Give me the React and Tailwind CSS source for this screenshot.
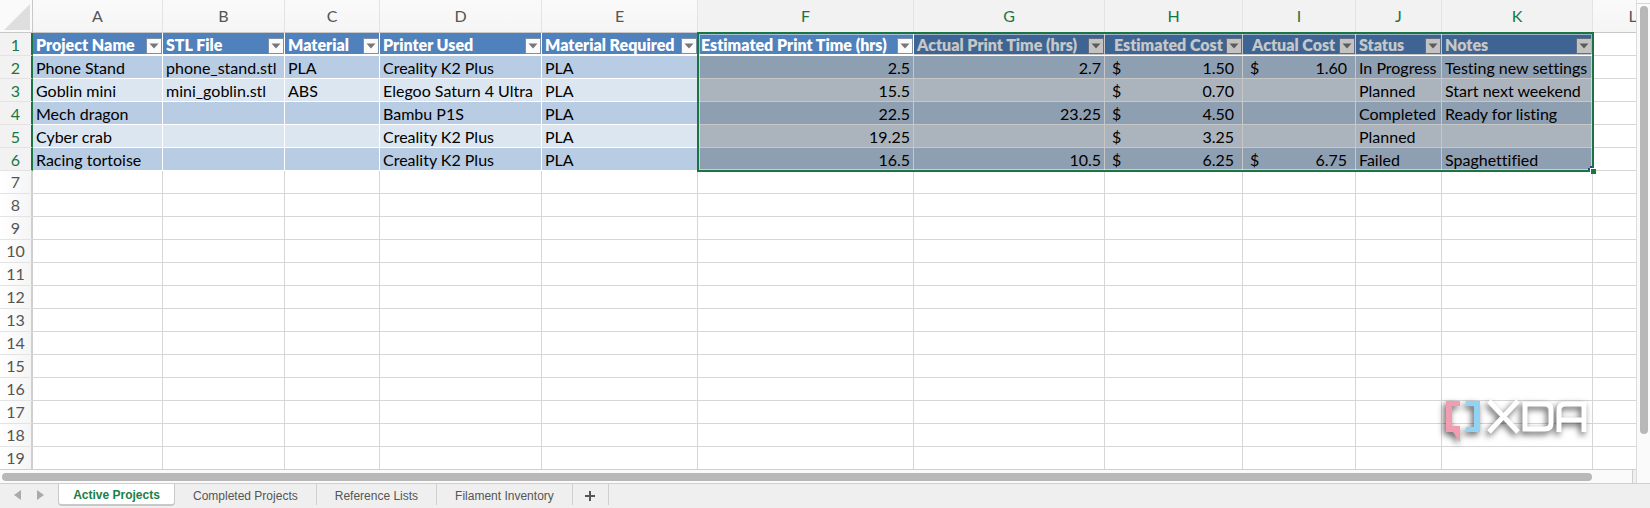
const columns = [
  { id: "A", width: "w-[130px]", title: "Project Name" },
  { id: "B", width: "w-[122px]", title: "STL File" },
  { id: "C", width: "w-[95px]", title: "Material" },
  { id: "D", width: "w-[162px]", title: "Printer Used" },
  { id: "E", width: "w-[156px]", title: "Material Required" },
  { id: "F", width: "w-[216px]", title: "Estimated Print Time (hrs)", number: true },
  { id: "G", width: "w-[191px]", title: "Actual Print Time (hrs)", number: true },
  { id: "H", width: "w-[138px]", title: "Estimated Cost", money: true },
  { id: "I", width: "w-[113px]", title: "Actual Cost", money: true },
  { id: "J", width: "w-[86px]", title: "Status" },
  { id: "K", width: "w-[151px]", title: "Notes" },
  { id: "L", width: "" },
];

const projects = [
  ["Phone Stand", "phone_stand.stl", "PLA", "Creality K2 Plus", "PLA", "2.5", "2.7", "1.50", "1.60", "In Progress", "Testing new settings"],
  ["Goblin mini", "mini_goblin.stl", "ABS", "Elegoo Saturn 4 Ultra", "PLA", "15.5", "", "0.70", "", "Planned", "Start next weekend"],
  ["Mech dragon", "", "", "Bambu P1S", "PLA", "22.5", "23.25", "4.50", "", "Completed", "Ready for listing"],
  ["Cyber crab", "", "", "Creality K2 Plus", "PLA", "19.25", "", "3.25", "", "Planned", ""],
  ["Racing tortoise", "", "", "Creality K2 Plus", "PLA", "16.5", "10.5", "6.25", "6.75", "Failed", "Spaghettified"],
];

const emptyRows = [7, 8, 9, 10, 11, 12, 13, 14, 15, 16, 17, 18, 19];

const sheets = ["Completed Projects", "Reference Lists", "Filament Inventory"];

const shade =
  "relative after:absolute after:-right-px after:-bottom-px after:top-0 after:left-0 after:bg-black/22 after:pointer-events-none";

const isSelected = (index) => index >= 5 && index <= 10;

const FilterButton = ({ title }) => (
  <button
    aria-label={`Filter ${title}`}
    className="flex h-4 w-4 shrink-0 items-center justify-center border border-[#7f8fa6] bg-[#fafafa]"
  >
    <svg width="10" height="6" viewBox="0 0 10 6">
      <path d="M0.5 0.5h9L5 5.5z" fill="#777" />
    </svg>
  </button>
);

const RowNumber = ({ number, active }) => (
  <th
    scope="row"
    className={
      active
        ? "h-[23px] border-r-2 border-b border-r-[#1a7544] border-b-[#e3e3e3] bg-[#f2f2f2] px-0 pt-px pb-0 text-center font-normal text-[#1a7544]"
        : "h-[23px] border-r-2 border-b border-r-[#cfcfcf] border-b-[#e3e3e3] bg-linear-to-r from-white to-[#f5f5f5] p-0 text-center font-normal text-[#555]"
    }
  >
    {number}
  </th>
);

const HeaderCell = ({ column, index }) => (
  <td
    className={`h-[23px] border-r border-b-2 border-white bg-[#4f81bd] p-0 ${index > 5 ? shade : ""}`}
  >
    <div className="flex h-[21px] items-end justify-between">
      <span
        className={`leading-[18px] font-extrabold whitespace-nowrap text-white ${column.money ? "pl-[9px]" : "pl-[3px]"}`}
      >
        {column.title}
      </span>
      <FilterButton title={column.title} />
    </div>
  </td>
);

const Cell = ({ value, column, index, banded }) => (
  <td
    className={`h-[23px] border-r border-b border-white px-[3px] pt-px pb-0 whitespace-nowrap ${
      banded ? "bg-[#b8cce4]" : "bg-[#dce6f1]"
    } ${column.number ? "text-right" : ""} ${isSelected(index) ? shade : ""}`}
  >
    {column.money && value ? (
      <div className="flex justify-between pr-[5px] pl-1">
        <span>$</span>
        <span>{value}</span>
      </div>
    ) : (
      value
    )}
  </td>
);

const EmptyCell = () => <td className="h-[23px] border-r border-b border-[#d6d6d6] bg-white p-0" />;

const Grid = () => (
  <div className="relative min-h-0 flex-1 overflow-hidden">
    <table className="w-full min-w-[1673px] table-fixed border-separate border-spacing-0 text-base leading-5 text-black [font-variant-ligatures:none]">
      <colgroup>
        <col className="w-[33px]" />
        {columns.map((column) => (
          <col key={column.id} className={column.width} />
        ))}
      </colgroup>
      <thead>
        <tr>
          <td className="h-[33px] border-r border-b border-[#c8c8c8] bg-[#fafafa] p-0">
            <svg className="mt-px ml-1" width="27" height="28" viewBox="0 0 27 28">
              <path d="M26 1v26H0z" fill="#dedede" />
            </svg>
          </td>
          {columns.map((column, index) => (
            <th
              key={column.id}
              scope="col"
              className={
                isSelected(index)
                  ? "h-[33px] border-r border-b border-r-[#e3e3e3] border-b-[#c8c8c8] bg-[#f2f2f2] p-0 font-normal text-[#1a7544]"
                  : "h-[33px] border-r border-b border-r-[#e3e3e3] border-b-[#c8c8c8] bg-linear-to-b from-[#fafafa] to-[#f5f5f5] p-0 font-normal text-[#555]"
              }
            >
              {column.id}
            </th>
          ))}
        </tr>
      </thead>
      <tbody>
        <tr>
          <RowNumber number={1} active />
          {columns.slice(0, 11).map((column, index) => (
            <HeaderCell key={column.id} column={column} index={index} />
          ))}
          <EmptyCell />
        </tr>
        {projects.map((project, row) => (
          <tr key={project[0]}>
            <RowNumber number={row + 2} active />
            {project.map((value, index) => (
              <Cell
                key={columns[index].id}
                value={value}
                column={columns[index]}
                index={index}
                banded={row % 2 === 0}
              />
            ))}
            <EmptyCell />
          </tr>
        ))}
        {emptyRows.map((number) => (
          <tr key={number}>
            <RowNumber number={number} />
            {columns.map((column) => (
              <EmptyCell key={column.id} />
            ))}
          </tr>
        ))}
      </tbody>
    </table>

    {/* selection frame around F1:K6 */}
    <div className="pointer-events-none absolute top-8 left-[697px] h-[140px] w-[897px] border-2 border-[#1a7544]">
      <div className="h-full border border-white/50" />
      <span className="absolute right-0 bottom-0 h-1 w-1 border-r-2 border-b-2 border-[#2f3e9e]" />
      <span className="absolute -right-1 -bottom-1 h-1.5 w-1.5 border-t border-l border-white bg-[#1a7544]" />
    </div>
  </div>
);

const Watermark = () => (
  <svg
    className="pointer-events-none absolute right-[60px] bottom-[62px] drop-shadow-[-2px_3px_3px_rgba(0,0,0,0.65)]"
    width="144"
    height="46"
    viewBox="0 0 144 46"
    role="img"
    aria-label="XDA"
  >
    <path d="M0 1h14v5H6v20h8v16L7 32H0z" fill="#f19cb0" />
    <path d="M20 1h14v31H20v-5h8V6h-8z" fill="#92d3f3" />
    <g fill="none" stroke="#fff" strokeWidth="5">
      <path d="M43 1l29 31M72 1L43 32" />
      <path d="M79 4h20q6 0 6 6v13q0 6-6 6H79z" />
      <path d="M113 32V10q0-6 6-6h19v28M113 20h25" />
    </g>
  </svg>
);

const SheetTabs = () => (
  <nav className="flex h-[25px] shrink-0 items-start border-t border-[#cfcfcf] bg-[#efefef] font-['Liberation_Sans',sans-serif] text-xs text-[#555]">
    <div className="flex h-[22px] w-[58px] items-center justify-center gap-4">
      <button aria-label="Previous sheet">
        <svg width="7" height="10" viewBox="0 0 7 10">
          <path d="M7 0v10L0 5z" fill="#aaa" />
        </svg>
      </button>
      <button aria-label="Next sheet">
        <svg width="7" height="10" viewBox="0 0 7 10">
          <path d="M0 0v10l7-5z" fill="#aaa" />
        </svg>
      </button>
    </div>
    <button className="h-[22px] w-[117px] rounded-b-sm border-x border-b-2 border-[#c8c8c8] bg-white pt-0.5 font-bold text-[#1a8048]">
      Active Projects
    </button>
    {sheets.map((sheet) => (
      <button key={sheet} className="h-[21px] border-r border-[#cfcfcf] px-[18px] pt-0.5">
        {sheet}
      </button>
    ))}
    <button aria-label="Add sheet" className="flex h-[21px] w-9 items-center justify-center border-r border-[#cfcfcf] pt-0.5">
      <svg width="10" height="10" viewBox="0 0 10 10">
        <path d="M5 0v10M0 5h10" stroke="#555" strokeWidth="2" />
      </svg>
    </button>
  </nav>
);

const App = () => (
  <main className="relative flex h-screen flex-col overflow-hidden bg-white font-[Lato,sans-serif]">
    <div className="flex min-h-0 flex-1">
      <div className="flex min-w-0 flex-1 flex-col">
        <Grid />
        <div className="flex h-[14px] shrink-0 items-center justify-between border-t border-[#d0d0d0] bg-[#fafafa] pl-0.5">
          <div className="mr-10 h-2 flex-1 rounded-full bg-[#b8b8b8]" />
          <div className="h-full w-1 border-l border-[#cfcfcf] bg-[#efefef]" />
        </div>
      </div>
      <div className="w-[14px] shrink-0 border-l border-[#dcdcdc] bg-[#fafafa]">
        <div className="h-1 border-b border-[#d6d6d6]" />
        <div className="mx-auto mt-0.5 h-[428px] w-2 rounded-full bg-[#b8b8b8]" />
      </div>
    </div>
    <SheetTabs />
    <Watermark />
  </main>
);

export default App;
